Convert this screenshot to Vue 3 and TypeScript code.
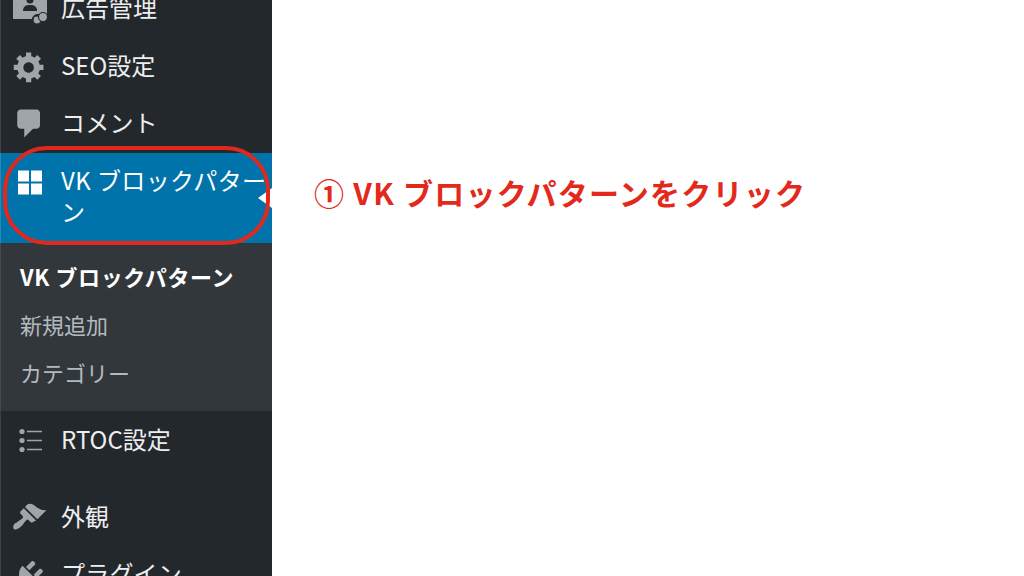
<script setup lang="ts">
interface MenuItem { label: string; path: string; cls?: string }
const before: MenuItem[] = [
  { label: 'SEO設定', path: 'M18 12h-2.18c-.17.7-.44 1.35-.81 1.93l1.54 1.54-2.1 2.1-1.54-1.54c-.58.36-1.23.63-1.91.79V19H8v-2.18c-.68-.16-1.33-.43-1.91-.79l-1.54 1.54-2.12-2.12 1.54-1.54c-.36-.58-.63-1.23-.79-1.91H1V9.03h2.17c.16-.7.44-1.35.8-1.94L2.43 5.55l2.1-2.1 1.54 1.54c.58-.37 1.24-.64 1.93-.81V2h3v2.18c.68.16 1.33.43 1.91.79l1.54-1.54 2.12 2.12-1.54 1.54c.36.59.64 1.24.8 1.94H18V12zm-8.5 1.5c1.66 0 3-1.34 3-3s-1.34-3-3-3-3 1.34-3 3 1.34 3 3 3z' },
  { label: 'コメント', path: 'M5 2h9c1.1 0 2 .9 2 2v7c0 1.1-.9 2-2 2h-2l-5 5v-5H5c-1.1 0-2-.9-2-2V4c0-1.1.9-2 2-2z', cls: 'kana' }
]
const after: MenuItem[] = [
  { label: '外観', path: 'M14.48 11.06L7.41 3.99l1.5-1.5c.5-.56 2.3-.47 3.51.32 1.21.8 1.43 1.28 2.91 2.1 1.18.64 2.45 1.26 4.45.85zm-.71.71L6.7 4.7 4.93 6.47c-.39.39-.39 1.02 0 1.41l1.06 1.06c.39.39.39 1.03 0 1.42-.6.6-1.43 1.11-2.21 1.69-.35.26-.7.53-1.01.84C1.43 13.23 0 15 .99 16.5c1.5.99 3.27-.44 4.61-1.78.31-.31.58-.66.84-1.01.58-.78 1.09-1.61 1.69-2.21.39-.39 1.02-.39 1.41 0l1.06 1.06c.39.39 1.02.39 1.41 0z' },
  { label: 'プラグイン', path: 'M13.11 4.36L9.87 7.6 8 5.73l3.24-3.24c.35-.34 1.05-.2 1.56.32.52.51.66 1.21.31 1.55zm-8 1.77l.91-1.12 9.01 9.01-1.19.84c-.71.71-2.63 1.16-3.82 1.16H6.14L4.9 17.26c-.59.59-1.54.59-2.12 0-.59-.58-.59-1.53 0-2.12l1.24-1.24v-3.88c0-1.13.4-3.19 1.09-3.89zm7.26 3.97l3.24-3.24c.34-.35 1.04-.21 1.55.31.52.51.66 1.21.31 1.55l-3.24 3.25z', cls: 'kana' }
]
const submenu = ['新規追加', 'カテゴリー']
</script>

<template>
  <div class="page">
    <aside class="sidebar">
      <div class="row">
        <svg class="icon" viewBox="0 0 35 35">
          <path class="fill" d="M1 2h34v22h-6a6 6 0 0 0-9 3v1H1z" />
          <circle class="cut" cx="18" cy="9" r="3.5" />
          <path class="cut" d="M11 20c0-5 3-6 7-6s7 1 7 6z" />
          <circle class="ring" cx="25" cy="29" r="4" />
          <circle class="ring" cx="31" cy="26" r="4.5" />
        </svg>
        <span class="label">広告管理</span>
      </div>
      <div v-for="item in before" :key="item.label" class="row">
        <svg class="icon" viewBox="0 0 20 20"><path class="fill" :d="item.path" /></svg>
        <span class="label" :class="item.cls">{{ item.label }}</span>
      </div>
      <div class="row active">
        <svg class="icon" viewBox="0 0 35 35">
          <path class="white" d="M6 4.5h11v11H6zM19 4.5h11v11H19zM6 17.5h11v11H6zM19 17.5h11v11H19z" />
        </svg>
        <span class="wrap">VK ブロックパターン</span>
        <i class="pointer"></i>
        <i class="oval"></i>
      </div>
      <ul class="sub">
        <li class="current">VK ブロックパターン</li>
        <li v-for="s in submenu" :key="s">{{ s }}</li>
      </ul>
      <div class="row rtoc">
        <svg class="icon" viewBox="0 0 35 35">
          <g class="fill"><circle cx="10" cy="8.5" r="2.6" /><circle cx="10" cy="17.5" r="2.6" /><circle cx="10" cy="26.5" r="2.6" /></g>
          <path class="line" d="M15 8.5h15M15 17.5h15M15 26.5h15" />
        </svg>
        <span class="label">RTOC設定</span>
      </div>
      <div v-for="item in after" :key="item.label" class="row">
        <svg class="icon" viewBox="0 0 20 20"><path class="fill" :d="item.path" /></svg>
        <span class="label" :class="item.cls">{{ item.label }}</span>
      </div>
    </aside>
    <main class="main">
      <p class="note">① VK ブロックパターンをクリック</p>
    </main>
  </div>
</template>

<style>
html, body { margin: 0; background: #fff; overflow: hidden; }
</style>

<style scoped>
.page {
  width: 1024px;
  height: 576px;
  overflow: hidden;
  display: flex;
  background: #fff;
  font-family: "Noto Sans CJK JP", "Noto Sans", sans-serif;
}
.sidebar {
  width: 272px;
  flex: none;
  margin-top: -20px;
  height: 640px;
  background: #23282d;
  box-shadow: inset 1px 0 0 #3c4146;
  color: #eee;
  font-size: 24px;
}
.row {
  position: relative;
  height: 57.5px;
  display: flex;
  align-items: center;
  gap: 14px;
  padding-left: 12px;
  box-sizing: border-box;
}
.icon { width: 35px; height: 35px; flex: none; overflow: visible; }
.fill { fill: #a0a5aa; }
.white { fill: #fff; }
.cut { fill: #23282d; }
.ring { fill: #a0a5aa; stroke: #23282d; stroke-width: 1.2; }
.line { stroke: #a0a5aa; stroke-width: 1.4; fill: none; }
.label { margin-bottom: 4px; }
.kana { letter-spacing: 0.2px; }
.active {
  height: 90px;
  align-items: flex-start;
  padding-top: 13px;
  background: #0073aa;
  color: #fff;
  box-shadow: inset 1px 0 0 #2a86b4;
}
.wrap { width: 208px; margin-top: -2px; line-height: 31px; letter-spacing: 0.4px; word-break: break-all; }
.pointer {
  position: absolute;
  right: 0;
  top: 35px;
  width: 0;
  height: 0;
  border-style: solid;
  border-width: 10px 14px 10px 0;
  border-color: transparent #fff transparent transparent;
}
.oval {
  position: absolute;
  left: 3px;
  top: -7px;
  width: 267px;
  height: 99px;
  box-sizing: border-box;
  border: 4px solid #e0281c;
  border-radius: 44px;
}
.sub {
  list-style: none;
  margin: 0;
  padding: 9px 0 0 20px;
  height: 168px;
  box-sizing: border-box;
  background: #32373c;
  box-shadow: inset 1px 0 0 #44494e;
  color: #b4b9be;
  font-size: 22px;
  line-height: 48px;
}
.current { color: #fff; font-weight: 700; letter-spacing: 0.6px; }
.rtoc { height: 60px; margin-bottom: 18px; }
.main { flex: 1; min-width: 0; }
.note {
  margin: 172px 0 0 42px;
  color: #e2291c;
  font-size: 30px;
  line-height: 40px;
  font-weight: 700;
  letter-spacing: 1.25px;
  white-space: nowrap;
}
</style>
